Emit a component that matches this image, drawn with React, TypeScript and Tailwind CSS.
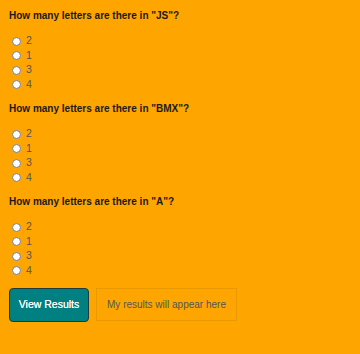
import { useState } from 'react';

const QUESTIONS = [
  { id: 'q1', text: 'How many letters are there in "JS"?' },
  { id: 'q2', text: 'How many letters are there in "BMX"?' },
  { id: 'q3', text: 'How many letters are there in "A"?' },
];

const OPTIONS = ['2', '1', '3', '4'];

export default function App() {
  const [answers, setAnswers] = useState<Record<string, string>>({});

  return (
    <div className="min-h-[354px] w-[360px] bg-[#ffa500] px-[9px] pt-[10px] pb-4 font-['Liberation_Sans',Arial,sans-serif]">
      {QUESTIONS.map((q) => (
        <div key={q.id} className="mb-[11.25px]">
          <p className="h-[12px] text-[10px] leading-[12px] font-bold text-[#1a1a1a]">{q.text}</p>
          <div className="mt-[11.75px]">
            {OPTIONS.map((o) => (
              <label key={o} className="flex h-[14.5px] items-center text-[10.5px] text-[#555]">
                <input
                  type="radio"
                  name={q.id}
                  checked={answers[q.id] === o}
                  onChange={() => setAnswers({ ...answers, [q.id]: o })}
                  className="m-0 ml-[3px] mr-[5px] h-[9px] w-[9px]"
                />
                {o}
              </label>
            ))}
          </div>
        </div>
      ))}
      <div className="mt-[-1px] flex items-start gap-[7px]">
        <button className="h-[34px] w-[80px] rounded-[4px] border border-[#1f3b3b] bg-[#008080] text-[10.5px] text-white [text-shadow:0_0_0.4px_white]">
          View Results
        </button>
        <div className="flex h-[33px] w-[141px] items-center justify-center border border-[#e89a00] text-[10px] text-[#555]">
          My results will appear here
        </div>
      </div>
    </div>
  );
}
